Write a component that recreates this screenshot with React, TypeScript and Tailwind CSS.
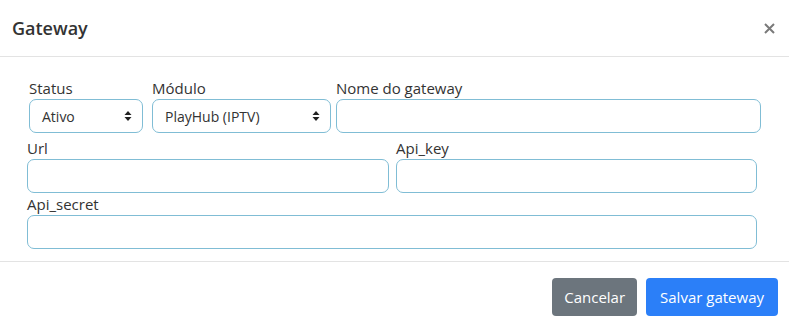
import React from "react";

const font = { fontFamily: '"Open Sans", "Noto Sans", sans-serif' };

function SelectBox({ value, width }: { value: string; width: string }) {
  return (
    <div
      className={`${width} h-[34px] rounded-[7px] border border-[#80bdd5] bg-white flex items-center justify-between pl-[12px] pr-[10px] text-[14px] text-[#333]`}
    >
      <span>{value}</span>
      <svg width="8" height="12" viewBox="0 0 8 12">
        <path d="M4 1 L7.5 5 H0.5 Z" fill="#222" />
        <path d="M4 11 L7.5 7 H0.5 Z" fill="#222" />
      </svg>
    </div>
  );
}

function Input({ width }: { width: string }) {
  return <div className={`${width} h-[34px] rounded-[7px] border border-[#80bdd5] bg-white`} />;
}

function Label({ children }: { children: React.ReactNode }) {
  return <div className="text-[15px] leading-[20px] text-[#333] h-[20px]">{children}</div>;
}

export default function App() {
  return (
    <div className="w-[789px] h-[330px] bg-white overflow-hidden" style={font}>
      <div className="h-[57px] border-b border-[#e3e3e3] flex items-center justify-between pl-[12px] pr-[14px]">
        <div className="text-[18px] font-semibold text-[#333]">Gateway</div>
        <svg width="11" height="11" viewBox="0 0 11 11">
          <path d="M1 1 L10 10 M10 1 L1 10" stroke="#7a7a7a" strokeWidth="2" />
        </svg>
      </div>
      <div className="h-[205px] border-b border-[#e3e3e3] pt-[21px]">
        <div className="flex items-end">
          <div className="flex flex-col gap-[1px] pl-[29px]">
            <Label>Status</Label>
            <SelectBox value="Ativo" width="w-[114px]" />
          </div>
          <div className="flex flex-col gap-[1px] pl-[9px]">
            <Label>Módulo</Label>
            <SelectBox value="PlayHub (IPTV)" width="w-[179px]" />
          </div>
          <div className="flex flex-col gap-[1px] pl-[5px]">
            <Label>Nome do gateway</Label>
            <Input width="w-[425px]" />
          </div>
        </div>
        <div className="flex pl-[27px] gap-[7px] mt-[5px]">
          <div className="flex flex-col gap-[1px]">
            <Label>Url</Label>
            <Input width="w-[362px]" />
          </div>
          <div className="flex flex-col gap-[1px]">
            <Label>Api_key</Label>
            <Input width="w-[361px]" />
          </div>
        </div>
        <div className="flex flex-col gap-[1px] pl-[27px] mt-[1px]">
          <Label>Api_secret</Label>
          <Input width="w-[730px]" />
        </div>
      </div>
      <div className="flex justify-end gap-[9px] pr-[11px] pt-[16px]">
        <button className="h-[38px] px-[12px] rounded-[4px] bg-[#6c757d] text-white text-[15px]">Cancelar</button>
        <button className="h-[38px] px-[14px] rounded-[4px] bg-[#2b7ff8] text-white text-[15px]">Salvar gateway</button>
      </div>
    </div>
  );
}
